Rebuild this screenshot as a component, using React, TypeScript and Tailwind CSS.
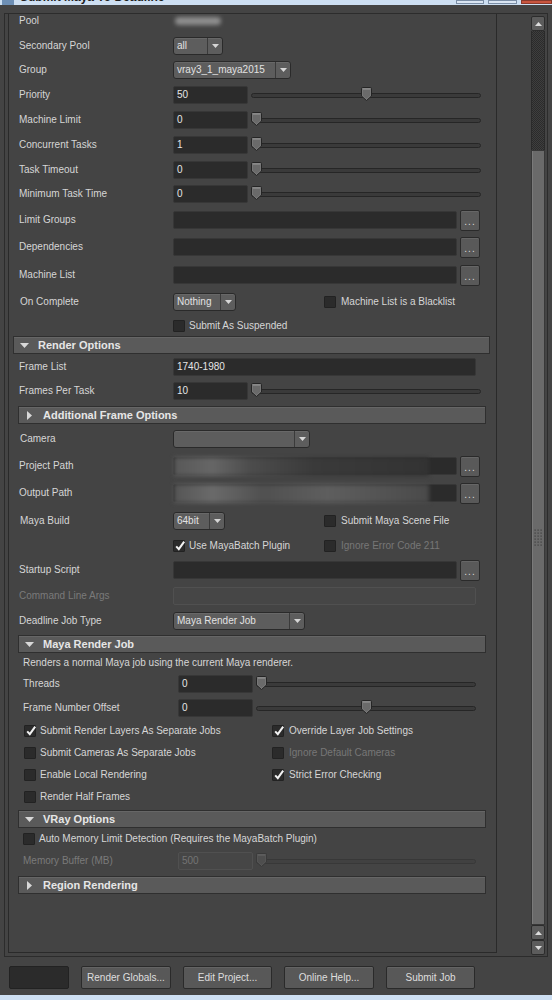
import React from "react";

type Kids = { children?: React.ReactNode };

function Tri({ dir }: { dir: "down" | "right" }) {
  return dir === "down" ? (
    <svg width="9" height="5" viewBox="0 0 9 5">
      <path d="M0 0H9L4.5 5Z" fill="#d8d8d8" />
    </svg>
  ) : (
    <svg width="5" height="9" viewBox="0 0 5 9">
      <path d="M0 0L5 4.5L0 9Z" fill="#d8d8d8" />
    </svg>
  );
}

function Header({ title, open, className }: { title: string; open?: boolean; className: string }) {
  return (
    <div
      className={`h-[18px] shrink-0 flex items-center bg-[#5a5a5a] border border-[#2f2f2f] shadow-[inset_0_1px_0_#666] ${className}`}
    >
      <div className="ml-[6px] w-[9px] flex items-center justify-center">
        <Tri dir={open ? "down" : "right"} />
      </div>
      <span className="ml-[9px] text-[11px] font-bold leading-none text-[#e6e6e6]">{title}</span>
    </div>
  );
}

function Row({
  mt,
  label,
  dim,
  pad = "pl-[10px]",
  lw = "w-[154px]",
  children,
}: Kids & { mt: string; label?: string; dim?: boolean; pad?: string; lw?: string }) {
  return (
    <div className={`h-[18px] shrink-0 flex items-center ${mt} ${pad}`}>
      <div className={`${lw} shrink-0 text-[10px] leading-none ${dim ? "text-[#7a7a7a]" : "text-[#d6d6d6]"}`}>
        {label}
      </div>
      {children}
    </div>
  );
}

function Combo({ value, w }: { value: string; w: string }) {
  return (
    <div
      className={`h-[18px] ${w} shrink-0 flex rounded-[3px] border border-[#2a2a2a] bg-[#5d5d5d] shadow-[inset_0_1px_0_#686868]`}
    >
      <div className="flex-1 flex items-center pl-[3px] text-[10px] leading-none text-[#e2e2e2] whitespace-nowrap overflow-hidden">
        {value}
      </div>
      <div className="w-[15px] border-l border-[#3a3a3a] flex items-center justify-center">
        <svg width="7" height="4" viewBox="0 0 7 4">
          <path d="M0 0H7L3.5 4Z" fill="#d6d6d6" />
        </svg>
      </div>
    </div>
  );
}

function Field({ value, w, dim, children }: Kids & { value?: string; w: string; dim?: boolean }) {
  return (
    <div
      className={`relative h-[18px] ${w} shrink-0 flex items-center px-[3px] rounded-[2px] border text-[10px] leading-none ${
        dim ? "bg-[#464646] border-[#505050] text-[#747474]" : "bg-[#2b2b2b] border-[#373737] text-[#e6e6e6]"
      }`}
    >
      {children}
      {value}
    </div>
  );
}

function Thumb({ dim }: { dim?: boolean }) {
  return (
    <svg width="11" height="14" viewBox="0 0 11 14">
      <path
        d="M1.5 0.5H9.5A1 1 0 0 1 10.5 1.5V9L5.5 13.5L0.5 9V1.5A1 1 0 0 1 1.5 0.5Z"
        fill={dim ? "#555" : "#777"}
        stroke={dim ? "#3a3a3a" : "#252525"}
      />
      <path d="M2 2H9V8.5L5.5 11.8L2 8.5Z" fill={dim ? "#4e4e4e" : "#6a6a6a"} />
      <path d="M2 2H9" stroke={dim ? "#666" : "#9a9a9a"} />
    </svg>
  );
}

function Slider({ frac, width, cls, dim }: { frac: number; width: number; cls: string; dim?: boolean }) {
  return (
    <div className={`relative h-[18px] ml-[3px] ${cls} flex items-center`}>
      <div
        className={`w-full h-[5px] rounded-[3px] border ${
          dim ? "bg-[#414141] border-[#383838]" : "bg-[#3a3a3a] border-[#262626]"
        }`}
      />
      <div className="absolute top-[1px]" style={{ left: Math.round(frac * (width - 11)) }}>
        <Thumb dim={dim} />
      </div>
    </div>
  );
}

function Dots() {
  return (
    <div className="ml-[3px] w-[20px] h-[21px] shrink-0 rounded-[2px] border border-[#2a2a2a] bg-[#595959] shadow-[inset_0_1px_0_#666] flex items-center justify-center pt-[4px] text-[10px] leading-none tracking-[1px] text-[#dcdcdc]">
      ...
    </div>
  );
}

function Check({ on, dim, label, gap = "gap-[4px]" }: { on?: boolean; dim?: boolean; label: string; gap?: string }) {
  return (
    <div className={`flex items-center ${gap}`}>
      <div className="relative w-[12px] h-[12px] shrink-0 bg-[#2b2b2b] border border-[#222] rounded-[1px]">
        {on && (
          <svg className="absolute left-[0px] top-[-1px]" width="12" height="12" viewBox="0 0 12 12">
            <path d="M2.2 6.4L4.8 9.2L10.2 1.6" stroke="#f2f2f2" strokeWidth="2" fill="none" />
          </svg>
        )}
      </div>
      <span className={`text-[10px] leading-none whitespace-nowrap ${dim ? "text-[#777]" : "text-[#d6d6d6]"}`}>
        {label}
      </span>
    </div>
  );
}

function Blur({ w, light }: { w: string; light?: boolean }) {
  return (
    <div
      className={`absolute left-0 top-[-1px] h-[19px] ${w} blur-[2px] ${
        light
          ? "bg-[linear-gradient(90deg,#555,#6a6a6a_15%,#505050_35%,#5e5e5e_60%,#4a4a4a)]"
          : "bg-[linear-gradient(90deg,#585858,#666_15%,#4c4c4c_30%,#3a3a3a_55%,#333)]"
      }`}
    />
  );
}

function ArrowBtn({ up }: { up?: boolean }) {
  return (
    <div className="h-[15px] shrink-0 rounded-[2px] border border-[#2c2c2c] bg-[#5c5c5c] flex items-center justify-center">
      <svg width="7" height="4" viewBox="0 0 7 4">
        <path d={up ? "M0 4H7L3.5 0Z" : "M0 0H7L3.5 4Z"} fill="#dcdcdc" />
      </svg>
    </div>
  );
}

function Btn({ label, cls }: { label: string; cls: string }) {
  return (
    <div
      className={`h-[23px] ${cls} shrink-0 rounded-[2px] border border-[#2a2a2a] bg-[#585858] shadow-[inset_0_1px_0_#646464] flex items-center justify-center text-[10px] leading-none text-[#dedede]`}
    >
      {label}
    </div>
  );
}

export default function App() {
  return (
    <div className="w-[552px] h-[1000px] bg-[#444444] flex flex-col overflow-hidden font-['Liberation_Sans',Arial,sans-serif]">
      {/* title bar, mostly cut off */}
      <div className="h-[5px] shrink-0 bg-[#cddff2] flex items-end overflow-hidden">
        <div className="ml-[2px] w-[12px] h-[5px] bg-[#6d8fb5]" />
        <span className="ml-[6px] text-[12px] leading-[15px] text-[#1e1e1e] font-bold">Submit Maya To Deadline</span>
        <div className="flex-1" />
        <div className="w-[28px] h-[4px] self-start border border-[#7b8ea6] bg-[#dbe6f3]" />
        <div className="ml-[4px] w-[29px] h-[4px] self-start border border-[#7b8ea6] bg-[#dbe6f3]" />
        <div className="ml-[4px] w-[31px] h-[4px] self-start border border-[#8a3a2c] bg-[#c9553f]" />
      </div>
      <div className="h-[8px] shrink-0" />

      {/* main frame */}
      <div className="ml-[4px] w-[544px] h-[944px] shrink-0 border border-[#2c2c2c] flex">
        <div className="ml-[3px] w-[489px] h-[939px] shrink-0 border-x border-b border-[#2a2a2a] overflow-hidden flex flex-col">
          <Row mt="mt-[-2px]" label="Pool">
            <div className="ml-[2px] w-[46px] h-[8px] bg-[#8e8e8e] blur-[2px] rounded-full" />
          </Row>
          <Row mt="mt-[7px]" label="Secondary Pool">
            <Combo value="all" w="w-[50px]" />
          </Row>
          <Row mt="mt-[6px]" label="Group">
            <Combo value="vray3_1_maya2015" w="w-[118px]" />
          </Row>
          <Row mt="mt-[7px]" label="Priority">
            <Field value="50" w="w-[75px]" />
            <Slider frac={0.5} width={230} cls="w-[230px]" />
          </Row>
          <Row mt="mt-[7px]" label="Machine Limit">
            <Field value="0" w="w-[75px]" />
            <Slider frac={0} width={230} cls="w-[230px]" />
          </Row>
          <Row mt="mt-[7px]" label="Concurrent Tasks">
            <Field value="1" w="w-[75px]" />
            <Slider frac={0} width={230} cls="w-[230px]" />
          </Row>
          <Row mt="mt-[7px]" label="Task Timeout">
            <Field value="0" w="w-[75px]" />
            <Slider frac={0} width={230} cls="w-[230px]" />
          </Row>
          <Row mt="mt-[6px]" label="Minimum Task Time">
            <Field value="0" w="w-[75px]" />
            <Slider frac={0} width={230} cls="w-[230px]" />
          </Row>
          <Row mt="mt-[8px]" label="Limit Groups">
            <Field w="w-[284px]" />
            <Dots />
          </Row>
          <Row mt="mt-[9px]" label="Dependencies">
            <Field w="w-[284px]" />
            <Dots />
          </Row>
          <Row mt="mt-[10px]" label="Machine List">
            <Field w="w-[284px]" />
            <Dots />
          </Row>
          <Row mt="mt-[9px]" label="On Complete" pad="pl-[11px]" lw="w-[153px]">
            <div className="w-[151px] shrink-0">
              <Combo value="Nothing" w="w-[63px]" />
            </div>
            <Check label="Machine List is a Blacklist" gap="gap-[5px]" />
          </Row>
          <Row mt="mt-[6px]">
            <Check label="Submit As Suspended" />
          </Row>

          {/* Render Options */}
          <Header title="Render Options" open className="mt-[1px] ml-[4px] w-[477px]" />
          <Row mt="mt-[4px]" label="Frame List">
            <Field value="1740-1980" w="w-[303px]" />
          </Row>
          <Row mt="mt-[6px]" label="Frames Per Task">
            <Field value="10" w="w-[75px]" />
            <Slider frac={0} width={230} cls="w-[230px]" />
          </Row>
          <Header title="Additional Frame Options" className="mt-[6px] ml-[9px] w-[468px]" />
          <Row mt="mt-[6px]" label="Camera" pad="pl-[11px]" lw="w-[153px]">
            <Combo value="" w="w-[137px]" />
          </Row>
          <Row mt="mt-[9px]" label="Project Path">
            <Field w="w-[284px]">
              <Blur w="w-[255px]" />
            </Field>
            <Dots />
          </Row>
          <Row mt="mt-[9px]" label="Output Path">
            <Field w="w-[284px]">
              <Blur w="w-[255px]" light />
            </Field>
            <Dots />
          </Row>
          <Row mt="mt-[10px]" label="Maya Build" pad="pl-[11px]" lw="w-[153px]">
            <div className="w-[151px] shrink-0">
              <Combo value="64bit" w="w-[52px]" />
            </div>
            <Check label="Submit Maya Scene File" gap="gap-[5px]" />
          </Row>
          <Row mt="mt-[7px]">
            <div className="w-[151px] shrink-0">
              <Check on label="Use MayaBatch Plugin" />
            </div>
            <Check dim label="Ignore Error Code 211" gap="gap-[5px]" />
          </Row>
          <Row mt="mt-[6px]" label="Startup Script">
            <Field w="w-[284px]" />
            <Dots />
          </Row>
          <Row mt="mt-[8px]" label="Command Line Args" dim>
            <Field dim w="w-[303px]" />
          </Row>
          <Row mt="mt-[7px]" label="Deadline Job Type">
            <Combo value="Maya Render Job" w="w-[132px]" />
          </Row>

          {/* Maya Render Job */}
          <Header title="Maya Render Job" open className="mt-[5px] ml-[9px] w-[468px]" />
          <div className="mt-[1px] h-[18px] shrink-0 flex items-center pl-[14px] text-[10px] leading-none text-[#d6d6d6]">
            Renders a normal Maya job using the current Maya renderer.
          </div>
          <Row mt="mt-[3px]" label="Threads" pad="pl-[14px]" lw="w-[155px]">
            <Field value="0" w="w-[75px]" />
            <Slider frac={0} width={220} cls="w-[220px]" />
          </Row>
          <Row mt="mt-[6px]" label="Frame Number Offset" pad="pl-[14px]" lw="w-[155px]">
            <Field value="0" w="w-[75px]" />
            <Slider frac={0.5} width={220} cls="w-[220px]" />
          </Row>
          <div className="mt-[5px] h-[18px] shrink-0 flex items-center pl-[15px]">
            <div className="w-[248px] shrink-0">
              <Check on label="Submit Render Layers As Separate Jobs" />
            </div>
            <Check on label="Override Layer Job Settings" gap="gap-[5px]" />
          </div>
          <div className="mt-[4px] h-[18px] shrink-0 flex items-center pl-[15px]">
            <div className="w-[248px] shrink-0">
              <Check label="Submit Cameras As Separate Jobs" />
            </div>
            <Check dim label="Ignore Default Cameras" gap="gap-[5px]" />
          </div>
          <div className="mt-[4px] h-[18px] shrink-0 flex items-center pl-[15px]">
            <div className="w-[248px] shrink-0">
              <Check label="Enable Local Rendering" />
            </div>
            <Check on label="Strict Error Checking" gap="gap-[5px]" />
          </div>
          <div className="mt-[4px] h-[18px] shrink-0 flex items-center pl-[15px]">
            <Check label="Render Half Frames" />
          </div>

          {/* VRay Options */}
          <Header title="VRay Options" open className="mt-[4px] ml-[9px] w-[468px]" />
          <div className="mt-[2px] h-[18px] shrink-0 flex items-center pl-[14px]">
            <Check label="Auto Memory Limit Detection (Requires the MayaBatch Plugin)" />
          </div>
          <Row mt="mt-[4px]" label="Memory Buffer (MB)" dim pad="pl-[14px]" lw="w-[155px]">
            <Field dim value="500" w="w-[75px]" />
            <Slider dim frac={0} width={220} cls="w-[220px]" />
          </Row>
          <Header title="Region Rendering" className="mt-[6px] ml-[9px] w-[468px]" />
        </div>

        {/* scrollbar */}
        <div className="ml-[34px] mt-[2px] w-[14px] h-[939px] shrink-0 flex flex-col">
          <ArrowBtn up />
          <div className="h-[119px] shrink-0 border-x border-[#2a2a2a] bg-[image:repeating-conic-gradient(#2b2b2b_0%_25%,#3e3e3e_0%_50%)] bg-[length:2px_2px]" />
          <div className="flex-1 bg-[#6a6a6a] border border-[#383838] shadow-[inset_1px_0_0_#7a7a7a] flex items-center justify-center">
            <svg width="9" height="17" viewBox="0 0 9 17">
              {[0, 1, 2, 3, 4, 5].map((r) =>
                [0, 1, 2].map((c) => (
                  <rect key={`${r}-${c}`} x={c * 3 + 0.5} y={r * 3 + 0.5} width="1.2" height="1.2" fill="#3c3c3c" />
                ))
              )}
            </svg>
          </div>
          <ArrowBtn up />
          <ArrowBtn />
        </div>
      </div>

      {/* bottom buttons */}
      <div className="mt-[9px] h-[23px] shrink-0 flex">
        <div className="ml-[9px] w-[60px] h-[23px] shrink-0 rounded-[2px] border border-[#222] bg-[#2b2b2b]" />
        <Btn label="Render Globals..." cls="ml-[12px] w-[90px]" />
        <Btn label="Edit Project..." cls="ml-[12px] w-[89px]" />
        <Btn label="Online Help..." cls="ml-[12px] w-[90px]" />
        <Btn label="Submit Job" cls="ml-[12px] w-[89px]" />
      </div>
      <div className="mt-[6px] h-[5px] shrink-0 bg-[#cddff2]" />
    </div>
  );
}
